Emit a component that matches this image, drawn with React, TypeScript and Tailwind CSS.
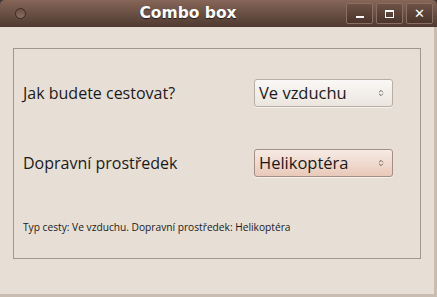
import { ChevronsUpDown } from "lucide-react";

function WinButton({ children }: { children: React.ReactNode }) {
  return (
    <div className="flex h-[21px] w-[27px] items-center justify-center rounded-[2px] border border-[#8a6e62] bg-gradient-to-b from-[#6e5246] to-[#4a352c] text-white">
      {children}
    </div>
  );
}

function Combo({ value, focused }: { value: string; focused?: boolean }) {
  return (
    <div
      className={
        "flex h-[28px] w-[139px] items-center justify-between rounded-[3px] border pl-[4px] pr-[7px] text-[16.5px] text-[#1a1a1a] shadow-[0_1px_0_rgba(255,255,255,0.6)] " +
        (focused
          ? "border-[#a58e84] bg-gradient-to-b from-[#f6ebe5] to-[#e9c9b9]"
          : "border-[#b8aea5] bg-gradient-to-b from-[#faf8f6] to-[#ebe5de]")
      }
    >
      <span>{value}</span>
      <ChevronsUpDown className="h-[8px] w-[8px] text-[#6a625c]" strokeWidth={3} />
    </div>
  );
}

export default function App() {
  return (
    <div className="flex h-[297px] w-[437px] flex-col bg-[#3c3b37] font-['Open_Sans',sans-serif]">
      <div className="relative flex h-[27px] shrink-0 items-center rounded-t-[5px] bg-gradient-to-b from-[#866658] to-[#4f3a31]">
        <div className="ml-[15px] h-[11px] w-[11px] rounded-full border border-[#3a2a23] bg-gradient-to-b from-[#6a4f44] to-[#8a6e62]" />
        <div className="absolute left-0 top-0 flex h-full w-[376px] items-center justify-center text-[15.5px] font-bold text-white [text-shadow:0_1px_1px_rgba(0,0,0,0.6)] font-['DejaVu_Sans',sans-serif]">
          Combo box
        </div>
        <div className="ml-auto mr-[4px] flex gap-[3px]">
          <WinButton>
            <div className="mt-[6px] h-[2px] w-[8px] bg-white" />
          </WinButton>
          <WinButton>
            <div className="h-[8px] w-[9px] border-[1.5px] border-t-2 border-white" />
          </WinButton>
          <WinButton>
            <span className="text-[13px] font-bold leading-none font-['DejaVu_Sans',sans-serif]">✕</span>
          </WinButton>
        </div>
      </div>
      <div className="flex flex-1 flex-col border-b-[3px] border-r-[3px] border-[#c9bdb2] bg-[#e7dfd6] px-[13px] pb-[35px] pt-[21px]">
        <div className="flex flex-1 flex-col border border-[#a0978f] pl-[9px] pr-[30px]">
          <div className="mt-[30px] flex items-center justify-between text-[16px] text-[#1a1a1a]">
            <span>Jak budete cestovat?</span>
            <div className="mr-[-3px]">
              <Combo value="Ve vzduchu" />
            </div>
          </div>
          <div className="mt-[42px] flex items-center justify-between text-[16px] text-[#1a1a1a]">
            <span>Dopravní prostředek</span>
            <div className="mr-[-3px]">
              <Combo value="Helikoptéra" focused />
            </div>
          </div>
          <div className="mt-[43px] text-[10.2px] text-[#1a1a1a]">
            Typ cesty: Ve vzduchu. Dopravní prostředek: Helikoptéra
          </div>
        </div>
      </div>
    </div>
  );
}
